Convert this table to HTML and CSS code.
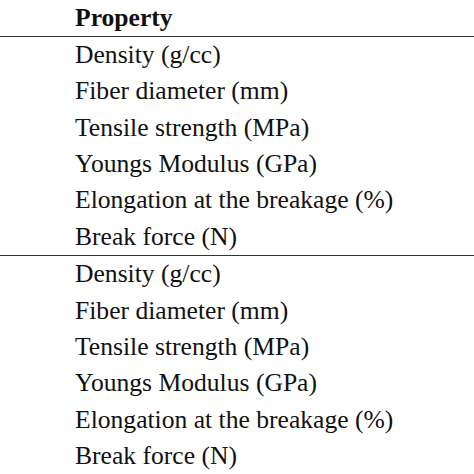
FILE: index.html
```html
<!DOCTYPE html>
<html>
<head>
<meta charset="utf-8">
<link rel="stylesheet" href="styles.css">
</head>
<body>
<div class="table">
  <div class="head">Property</div>
  <div class="group">
    <div class="row">Density (g/cc)</div>
    <div class="row">Fiber diameter (mm)</div>
    <div class="row">Tensile strength (MPa)</div>
    <div class="row">Youngs Modulus (GPa)</div>
    <div class="row">Elongation at the breakage (%)</div>
    <div class="row">Break force (N)</div>
  </div>
  <div class="group second">
    <div class="row">Density (g/cc)</div>
    <div class="row">Fiber diameter (mm)</div>
    <div class="row">Tensile strength (MPa)</div>
    <div class="row">Youngs Modulus (GPa)</div>
    <div class="row">Elongation at the breakage (%)</div>
    <div class="row">Break force (N)</div>
  </div>
</div>
</body>
</html>
```
FILE: styles.css
```css
html, body {
  margin: 0;
  padding: 0;
  background: #ffffff;
}
body {
  font-family: "Liberation Serif", "Times New Roman", serif;
  font-size: 25.6px;
  color: #111111;
  width: 474px;
  height: 474px;
  overflow: hidden;
}
.table {
  display: flex;
  flex-direction: column;
  width: 474px;
}
.head {
  height: 35.8px;
  line-height: 35.2px;
  font-weight: bold;
  padding-left: 75px;
  border-bottom: 1.5px solid #333333;
}
.group {
  display: flex;
  flex-direction: column;
}
.second {
  border-top: 1.5px solid #333333;
}
.row {
  height: 36.4px;
  line-height: 36.4px;
  padding-left: 75px;
  white-space: nowrap;
}
```
